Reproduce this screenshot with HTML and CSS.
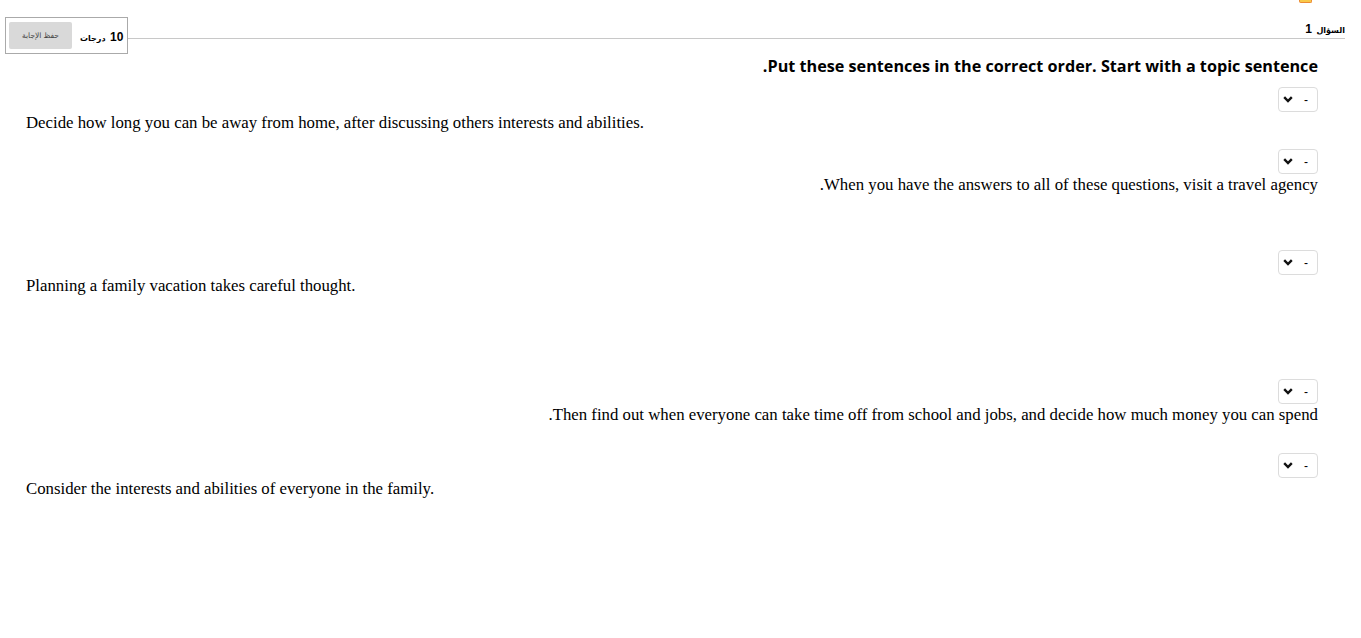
FILE: index.html
```html
<!DOCTYPE html>
<html lang="ar" dir="rtl">
<head>
<meta charset="utf-8">
<title>السؤال 1</title>
<link rel="stylesheet" href="styles.css">
</head>
<body>
<div class="topbar"><span class="topbar-icon"></span></div>
<div class="question">
  <div class="q-header">
    <div class="q-title"><span class="q-ar">السؤال</span> <span class="q-num">1</span></div>
    <div class="q-box">
      <span class="q-points"><span class="q-num">10</span> <span class="q-ar">درجات</span></span>
      <button class="q-save" type="button">حفظ الإجابة</button>
    </div>
  </div>
  <div class="q-body">
    <h2 class="q-prompt">Put these sentences in the correct order. Start with a topic sentence.</h2>

    <div class="item gap-a">
      <div class="sel-wrap"><span class="sel"><span class="sel-val">-</span><svg class="chev" width="10" height="7" viewBox="0 0 10 7"><path d="M1.2 1.2 L5 5 L8.8 1.2" fill="none" stroke="#111" stroke-width="2.4"/></svg></span></div>
      <p class="sentence" dir="ltr">Decide how long you can be away from home, after discussing others interests and abilities.</p>
    </div>

    <div class="item gap-b">
      <div class="sel-wrap"><span class="sel"><span class="sel-val">-</span><svg class="chev" width="10" height="7" viewBox="0 0 10 7"><path d="M1.2 1.2 L5 5 L8.8 1.2" fill="none" stroke="#111" stroke-width="2.4"/></svg></span></div>
      <p class="sentence">When you have the answers to all of these questions, visit a travel agency.</p>
    </div>

    <div class="item gap-c">
      <div class="sel-wrap"><span class="sel"><span class="sel-val">-</span><svg class="chev" width="10" height="7" viewBox="0 0 10 7"><path d="M1.2 1.2 L5 5 L8.8 1.2" fill="none" stroke="#111" stroke-width="2.4"/></svg></span></div>
      <p class="sentence" dir="ltr">Planning a family vacation takes careful thought.</p>
    </div>

    <div class="item gap-d">
      <div class="sel-wrap"><span class="sel"><span class="sel-val">-</span><svg class="chev" width="10" height="7" viewBox="0 0 10 7"><path d="M1.2 1.2 L5 5 L8.8 1.2" fill="none" stroke="#111" stroke-width="2.4"/></svg></span></div>
      <p class="sentence">Then find out when everyone can take time off from school and jobs, and decide how much money you can spend.</p>
    </div>

    <div class="item">
      <div class="sel-wrap"><span class="sel"><span class="sel-val">-</span><svg class="chev" width="10" height="7" viewBox="0 0 10 7"><path d="M1.2 1.2 L5 5 L8.8 1.2" fill="none" stroke="#111" stroke-width="2.4"/></svg></span></div>
      <p class="sentence" dir="ltr">Consider the interests and abilities of everyone in the family.</p>
    </div>
  </div>
</div>
</body>
</html>
```

FILE: styles.css
```css
html, body {
  margin: 0;
  padding: 0;
  background: #fff;
}
body {
  font-family: "Liberation Sans", "DejaVu Sans", sans-serif;
  color: #000;
}
.topbar {
  height: 3px;
  display: flex;
  padding-right: 49px;
  overflow: hidden;
}
.topbar-icon {
  display: block;
  width: 11px;
  height: 2px;
  background: #f8c94a;
  border: 1px solid #ec8b32;
  border-top: none;
  border-radius: 0 0 2px 2px;
}
.question {
  padding: 14px 16px 0 5px;
}
.q-header {
  display: flex;
  align-items: flex-start;
}
.q-title {
  flex: 1;
  height: 20px;
  padding-top: 1px;
  border-bottom: 1px solid #c8c8c8;
  font-weight: bold;
  line-height: 20px;
  text-align: right;
}
.q-ar {
  font-size: 8px;
}
.q-num {
  font-size: 12px;
}
.q-box {
  display: flex;
  align-items: center;
  gap: 8px;
  border: 1px solid #aaa;
  padding: 4px 4px 4px 3px;
  background: #fff;
}
.q-points {
  font-weight: bold;
  white-space: nowrap;
}
.q-save {
  width: 63px;
  height: 27px;
  border: none;
  border-radius: 2px;
  background: #d9d9d9;
  color: #444;
  font-family: "Liberation Sans", "DejaVu Sans", sans-serif;
  font-size: 7.5px;
  padding: 0;
}
.q-body {
  padding: 0 27px 0 21px;
}
.q-prompt {
  font-family: "Open Sans", sans-serif;
  font-weight: bold;
  font-size: 16.2px;
  line-height: 22px;
  margin: 1px 0 10px 0;
  text-align: right;
}
.item {
  display: flex;
  flex-direction: column;
}
.sel-wrap {
  display: flex;
  justify-content: flex-start;
  height: 25px;
}
.sel {
  box-sizing: border-box;
  width: 40px;
  height: 25px;
  border: 1px solid #dcdcdc;
  border-radius: 4px;
  display: flex;
  align-items: center;
  justify-content: space-between;
  padding: 0 9px 0 4px;
  background: #fff;
}
.sel-val {
  font-size: 12px;
  line-height: 12px;
}
.chev {
  display: block;
}
.sentence {
  margin: 2px 0 0 0;
  font-family: "Liberation Serif", "Times New Roman", serif;
  font-size: 16.8px;
  line-height: 18px;
}
.sentence[dir="ltr"] {
  text-align: left;
}
.gap-a { margin-bottom: 17px; }
.gap-b { margin-bottom: 56px; }
.gap-c { margin-bottom: 84px; }
.gap-d { margin-bottom: 29px; }
```
